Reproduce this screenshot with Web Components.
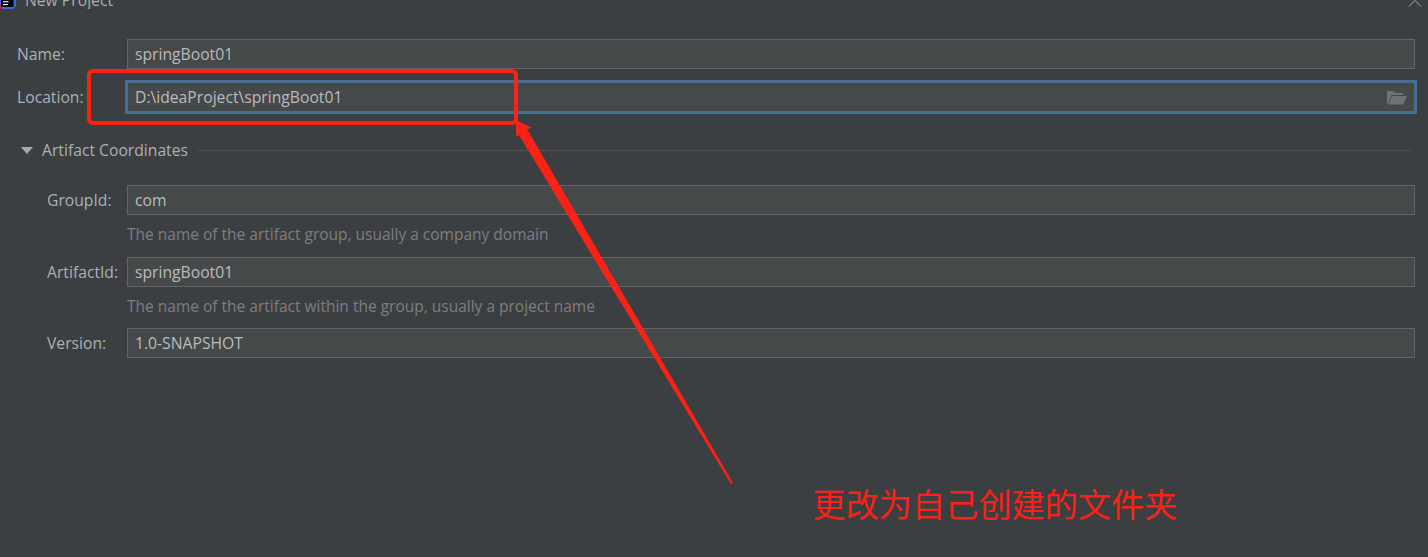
<!DOCTYPE html>
<html>
<head>
<meta charset="utf-8">
<title>New Project</title>
<style>
  html, body { margin: 0; height: 100%; background: #3c3f41; overflow: hidden; }
</style>
</head>
<body>
<new-project-dialog>
  <dialog-title slot="title">New Project</dialog-title>
  <form-field label="Name:" value="springBoot01"></form-field>
  <form-field label="Location:" value="D:\ideaProject\springBoot01" focused browse></form-field>
  <section-header>Artifact Coordinates</section-header>
  <form-field nested label="GroupId:" value="com" hint="The name of the artifact group, usually a company domain"></form-field>
  <form-field nested label="ArtifactId:" value="springBoot01" hint="The name of the artifact within the group, usually a project name"></form-field>
  <form-field nested label="Version:" value="1.0-SNAPSHOT"></form-field>
</new-project-dialog>
<red-callout>更改为自己创建的文件夹</red-callout>

<script>
const FONT = '"Open Sans", "Noto Sans", "Liberation Sans", sans-serif';

class NewProjectDialog extends HTMLElement {
	constructor() {
		super();
		this.attachShadow({ mode: "open" }).innerHTML = `
<style>
    :host { display: block; height: 557px; background: #3c3f41; color: #bbbbbb; font: 15.7px/20px ${FONT}; }
    .body { display: flex; flex-direction: column; padding: 30px 13px 0 17px; }
</style>
<slot name="title"></slot>
<div class="body"><slot></slot></div>
`;
	}
}

class DialogTitle extends HTMLElement {
	constructor() {
		super();
		this.attachShadow({ mode: "open" }).innerHTML = `
<style>
    :host { display: flex; align-items: flex-end; justify-content: space-between; height: 9px; overflow: hidden; }
    .left { display: flex; align-items: flex-end; gap: 9px; }
    .logo { display: block; flex: none; }
    .text { line-height: 20px; color: #a9adb0; flex: none; transform: translateY(1px); }
    .close { display: block; margin-right: 6px; flex: none; }
</style>
<div class="left">
    <svg class="logo" width="16" height="9" viewBox="0 0 16 9">
        <path d="M0 0h16v6l-3 3H2.500L0 7z" fill="#2b6fe0"/>
        <path d="M0 2.500V7l2 2h2L0 2.500z" fill="#c2327c"/>
        <rect x="1" y="0" width="12.500" height="7" fill="#000"/>
        <rect x="3" y="1.200" width="5.500" height="1.100" fill="#fff"/>
        <rect x="3" y="4" width="5" height="1.100" fill="#fff"/>
    </svg>
    <span class="text"><slot></slot></span>
</div>
<svg class="close" width="14" height="9" viewBox="0 0 14 9" fill="none" stroke="#a9adb0" stroke-width="1">
    <path d="M1 6.500L7 .5L13 6.500"/>
</svg>
`;
	}
}

class FormField extends HTMLElement {
	constructor() {
		super();
		this.attachShadow({ mode: "open" }).innerHTML = `
<style>
    :host { display: grid; grid-template-columns: 110px 1fr; align-items: center; margin-bottom: 12px; }
    :host([focused]) { margin-top: -1px; }
    :host([nested]) { padding-left: 30px; grid-template-columns: 80px 1fr; margin-bottom: 15.500px; }
    .label { color: #a9b1b8; white-space: nowrap; }
    .input {
        display: flex; align-items: center; justify-content: space-between;
        box-sizing: border-box; height: 30px; padding: 0 7px;
        background: #45494a; border: 1px solid #646464; color: #bbbbbb;
        white-space: pre;
    }
    :host([focused]) .input { margin: 0 -2px; height: 34px; border: 3px solid #466d94; padding: 0 7px 0 7px; }
    .hint { grid-column: 2; color: #7c7e80; font-size: 15.500px; margin-top: 9px; margin-bottom: -3px; height: 20px; }
    .hint:empty { display: none; }
    svg { display: block; flex: none; }
</style>
<span class="label"></span>
<div class="input"><span class="value"></span></div>
<div class="hint"></div>
`;
	}

	connectedCallback() {
		const root = this.shadowRoot;
		root.querySelector(".label").textContent = this.getAttribute("label");
		root.querySelector(".value").textContent = this.getAttribute("value");
		root.querySelector(".hint").textContent = this.getAttribute("hint") || "";
		if (this.hasAttribute("browse")) {
			root.querySelector(".input").insertAdjacentHTML("beforeend", `
<svg width="20" height="15" viewBox="0 0 20 15">
    <path d="M0 1h6l2 2h8v2H4.500L1 14H0z" fill="#6e7275"/>
    <path d="M5 6h15l-3.500 8.500H1.500z" fill="#6e7275"/>
</svg>`);
		}
	}
}

class SectionHeader extends HTMLElement {
	constructor() {
		super();
		this.attachShadow({ mode: "open" }).innerHTML = `
<style>
    :host { display: flex; align-items: center; margin: 14px 4px 25px 4px; color: #a9b1b8; }
    svg { flex: none; margin-right: 9px; }
    .text { flex: none; margin-right: 10px; }
    .line { flex: 1; height: 1px; background: #515151; }
</style>
<svg width="12" height="7" viewBox="0 0 12 7"><path d="M0 0h12L6 7z" fill="#a9adb0"/></svg>
<span class="text"><slot></slot></span>
<div class="line"></div>
`;
	}
}

class RedCallout extends HTMLElement {
	constructor() {
		super();
		this.attachShadow({ mode: "open" }).innerHTML = `
<style>
    :host { display: block; position: absolute; inset: 0; pointer-events: none; }
    svg { position: absolute; left: 0; top: 0; }
    .note {
        position: absolute; left: 812.500px; top: 480px; white-space: nowrap;
        font: 33.200px/46px "Noto Sans CJK SC", sans-serif; color: #ff2016;
    }
</style>
<svg width="1428" height="557" viewBox="0 0 1428 557">
    <rect x="89" y="71" width="427" height="52" rx="4" fill="none" stroke="#ff2016" stroke-width="4"/>
    <polygon points="516,120 532,128 527,129 733,483 731,484 519,135 516,137" fill="#ff2016"/>
</svg>
<div class="note"><slot></slot></div>
`;
	}
}

customElements.define("new-project-dialog", NewProjectDialog);
customElements.define("dialog-title", DialogTitle);
customElements.define("form-field", FormField);
customElements.define("section-header", SectionHeader);
customElements.define("red-callout", RedCallout);
</script>
</body>
</html>
